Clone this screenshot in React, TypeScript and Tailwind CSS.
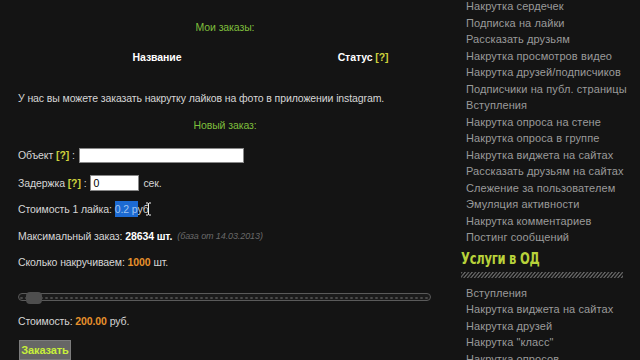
import React from "react"

const vkLinks = [
  "Накрутка сердечек",
  "Подписка на лайки",
  "Рассказать друзьям",
  "Накрутка просмотров видео",
  "Накрутка друзей/подписчиков",
  "Подписчики на публ. страницы",
  "Вступления",
  "Накрутка опроса на стене",
  "Накрутка опроса в группе",
  "Накрутка виджета на сайтах",
  "Рассказать друзьям на сайтах",
  "Слежение за пользователем",
  "Эмуляция активности",
  "Накрутка комментариев",
  "Постинг сообщений",
]

const okLinks = ["Вступления", "Накрутка виджета на сайтах", "Накрутка друзей", 'Накрутка "класс"', "Накрутка опросов"]

function Help() {
  return <span className="font-bold text-[#cdd23c]">[?]</span>
}

export default function App() {
  return (
    <div className="flex h-[360px] w-[640px] overflow-hidden bg-[#141414] font-['Liberation_Sans',sans-serif] text-[10.5px] tracking-[-0.1px] text-[#d6d6d6]">
      <div className="flex w-[450px] shrink-0 flex-col">
        <div className="mt-[19px] h-4 text-center leading-4 text-[#7fbf3c]">Мои заказы:</div>
        <div className="mt-[14px] flex h-4 font-bold leading-4 text-white">
          <div className="w-[314px] text-center">Название</div>
          <div className="w-[98px] text-center">
            Статус <Help />
          </div>
        </div>
        <div className="mt-[25px] h-4 pl-[18px] leading-4">У нас вы можете заказать накрутку лайков на фото в приложении instagram.</div>
        <div className="mt-[11px] h-4 text-center leading-4 text-[#7fbf3c]">Новый заказ:</div>

        <div className="mt-[14px] flex h-4 items-center pl-[18px] leading-4">
          <span>
            Объект <Help /> :
          </span>
          <div className="ml-[4px] h-[15px] w-[165px] border border-[#888] bg-white" />
        </div>
        <div className="mt-[12px] flex h-4 items-center pl-[18px] leading-4">
          <span>
            Задержка <Help /> :
          </span>
          <div className="ml-[4px] flex h-[16px] w-[49px] items-center border border-[#888] bg-white pl-[2px] text-black">0</div>
          <span className="ml-[4px]">сек.</span>
        </div>
        <div className="relative mt-[10px] flex h-4 items-center pl-[18px] leading-4">
          <span>Стоимость 1 лайка:&nbsp;</span>
          <span className="bg-[#1c6ad2] text-[#9fc4f0]">0.2 р</span>
          <span>уб</span>
          <svg className="absolute left-[145px] top-[1px]" width="7" height="14" viewBox="0 0 7 14">
            <path d="M1 1h2l.5.5.5-.5h2M3.5 1.5v11M1 13h2l.5-.5.5.5h2" fill="none" stroke="#f2f2f2" strokeWidth="1" />
          </svg>
        </div>
        <div className="mt-[11px] flex h-4 items-center pl-[18px] leading-4">
          <span>Максимальный заказ:&nbsp;</span>
          <span className="font-bold text-white">28634 шт.</span>
          <span className="ml-[5px] text-[9px] italic text-[#6a6a6a]">(база от 14.03.2013)</span>
        </div>
        <div className="mt-[10px] flex h-4 items-center pl-[18px] leading-4">
          <span>Сколько накручиваем:&nbsp;</span>
          <span className="font-bold text-[#e8912c]">1000</span>
          <span>&nbsp;шт.</span>
        </div>

        <div className="relative ml-[18px] mt-[23px] h-[10px] w-[413px] rounded-full border border-[#5a5a5a] bg-[#1b1b1b] bg-[radial-gradient(circle,#4a4a4a_1px,transparent_1.4px)] bg-[length:5px_8px]">
          <div className="absolute left-[7px] top-[-2px] h-[12px] w-[16px] rounded-[4px] bg-[#4e4e4e]" />
        </div>

        <div className="mt-[12px] flex h-4 items-center pl-[18px] leading-4">
          <span>Стоимость:&nbsp;</span>
          <span className="font-bold text-[#e8912c]">200.00</span>
          <span>&nbsp;руб.</span>
        </div>
        <div className="ml-[19px] mt-[11px]">
          <button className="h-[20px] w-[52px] border border-[#7c7c7c] bg-[#666] text-[11px] font-bold leading-[18px] text-[#c8f03a]">Заказать</button>
        </div>
      </div>

      <div className="ml-[11px] flex w-[170px] flex-col text-[11px] leading-[16.5px] tracking-[0.1px] text-[#9a9a9a]">
        <ul className="mt-[-2px] pl-[5px]">
          {vkLinks.map((l) => (
            <li key={l} className="whitespace-nowrap">
              {l}
            </li>
          ))}
        </ul>
        <div className="mt-[3px] h-[20px] origin-left scale-x-[0.8] whitespace-nowrap font-['DejaVu_Sans_Condensed','DejaVu_Sans',sans-serif] text-[16px] font-bold leading-[20px] tracking-[-0.3px] text-[#b8d23a]">
          Услуги в ОД
        </div>
        <svg className="mt-[3px] block shrink-0" width="162" height="6">
          <defs>
            <pattern id="stripes" width="3.5" height="6" patternUnits="userSpaceOnUse" patternTransform="skewX(-40)">
              <rect width="1.6" height="6" fill="#666" />
            </pattern>
          </defs>
          <rect width="162" height="6" fill="url(#stripes)" />
        </svg>
        <ul className="mt-[7px] pl-[5px]">
          {okLinks.map((l) => (
            <li key={l} className="whitespace-nowrap">
              {l}
            </li>
          ))}
        </ul>
      </div>
    </div>
  )
}
